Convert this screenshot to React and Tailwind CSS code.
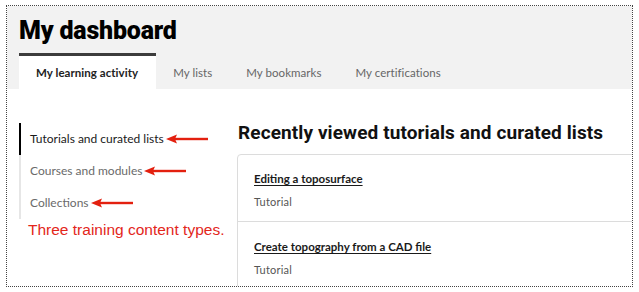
import React from 'react'

const ui = { fontFamily: 'Lato, "Noto Sans", sans-serif' }
const heavy = { fontFamily: 'Roboto, "Liberation Sans", sans-serif' }
const note = { fontFamily: '"Liberation Sans", Arial, sans-serif' }

function Arrow() {
  return (
    <svg width="42" height="10" viewBox="0 0 42 10" className="inline-block ml-[2px] align-middle">
      <path d="M0 5 L11 0.5 L9 5 L11 9.5 Z" fill="#e3200f" />
      <rect x="8" y="3.8" width="34" height="2.4" fill="#e3200f" />
    </svg>
  )
}

const tabs = ['My learning activity', 'My lists', 'My bookmarks', 'My certifications']
const sideItems = ['Tutorials and curated lists', 'Courses and modules', 'Collections']
const recent = ['Editing a toposurface', 'Create topography from a CAD file']

function App() {
  return (
    <div className="w-[639px] h-[292px] bg-white pt-[5px] pl-[6px]">
      <div className="w-[627px] h-[282px] border border-dotted border-[#444] overflow-hidden" style={ui}>
        {/* header */}
        <div className="bg-[#f2f2f2] pl-[12px] pt-[9px]">
          <h1 className="text-[25px] leading-[32px] font-black text-black tracking-[-0.2px]" style={heavy}>
            My dashboard
          </h1>
          <div className="flex mt-[6px] h-[36px]">
            {tabs.map((t, i) => (
              <div
                key={t}
                className={
                  i === 0
                    ? 'bg-white border-t-[3px] border-[#3c3c3c] pl-[17px] pr-[18px] flex items-center text-[11.5px] font-bold text-[#222] tracking-[0.05px]'
                    : 'px-[17px] flex items-center text-[11.5px] text-[#666] pt-[3px] tracking-[0.05px]'
                }
              >
                {t}
              </div>
            ))}
          </div>
        </div>

        {/* body */}
        <div className="flex pl-[12px] pt-[34px]">
          <div className="w-[218px] shrink-0">
            <div className="border-l-2 border-[#e6e6e6]">
              {sideItems.map((s, i) => (
                <div
                  key={s}
                  className={
                    'h-[32px] flex items-center pl-[9px] -ml-[2px] text-[12px] ' +
                    (i === 0 ? 'border-l-2 border-black text-[#1a1a1a]' : 'border-l-2 border-transparent text-[#6a6a6a]')
                  }
                >
                  <span>{s}</span>
                  <Arrow />
                </div>
              ))}
            </div>
            <div className="text-[#e3261b] text-[15.5px] leading-[20px] pl-[9px] mt-[1px]" style={note}>
              Three training content types.
            </div>
          </div>

          <div className="flex-1 min-w-[400px] -mt-[2px]">
            <h2 className="text-[19px] leading-[24px] font-bold text-[#111] pl-[1px] tracking-[0.1px]" style={heavy}>
              Recently viewed tutorials and curated lists
            </h2>
            <div className="mt-[9px] border border-[#dcdcdc] rounded-tl-[4px] w-[420px]">
              {recent.map((r, i) => (
                <div key={r} className={'pl-[16px] pt-[17px] pb-[12px] ' + (i > 0 ? 'border-t border-[#dcdcdc] pt-[18px]' : '')}>
                  <div className="text-[11.5px] leading-[14px] font-bold text-[#1a1a1a] underline underline-offset-2">{r}</div>
                  <div className="text-[11px] leading-[14px] text-[#555] mt-[9px] tracking-[0.2px]">Tutorial</div>
                </div>
              ))}
            </div>
          </div>
        </div>
      </div>
    </div>
  )
}

export default App
